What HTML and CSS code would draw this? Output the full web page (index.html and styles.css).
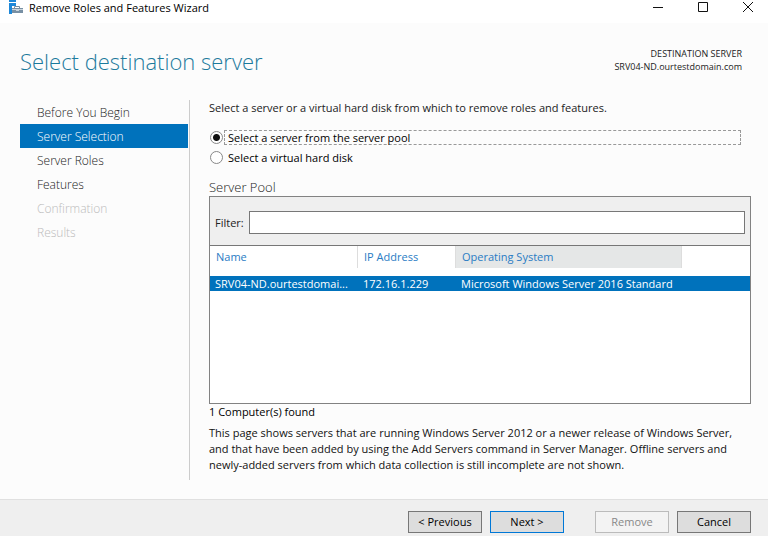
FILE: index.html
```html
<!DOCTYPE html>
<html lang="en">
<head>
    <meta charset="UTF-8">
    <title>Remove Roles and Features Wizard</title>
    <link rel="stylesheet" href="styles.css">
</head>
<body>

    <header class="titlebar">
        <svg class="app-icon" width="14" height="14" viewBox="0 0 14 14" aria-hidden="true">
            <path fill="#1e88d8" d="M0 0h7v2H0zM0 3h7v3H3v8H0z"/>
            <path fill="none" stroke="#7890a4" d="M5.500 8V6.500h5V8"/>
            <path fill="#7890a4" d="M3 8h11v5H3z"/>
            <path fill="#c9d4dc" d="M3 9h11v1h-4v1H7v-1H3z"/>
        </svg>
        <span class="window-title">Remove Roles and Features Wizard</span>
        <div class="window-controls">
            <button type="button" aria-label="Minimize"><svg width="10" height="10" viewBox="0 0 10 10"><path d="M0 5.500h10"/></svg></button>
            <button type="button" aria-label="Maximize"><svg width="10" height="10" viewBox="0 0 10 10"><path d="M.5.5h9v9h-9z"/></svg></button>
            <button type="button" aria-label="Close"><svg width="10" height="10" viewBox="0 0 10 10"><path d="M0 0l10 10M10 0L0 10"/></svg></button>
        </div>
    </header>

    <div class="page-header">
        <h1>Select destination server</h1>
        <div class="destination">DESTINATION SERVER<br>SRV04-ND.ourtestdomain.com</div>
    </div>

    <div class="wizard">
        <nav class="steps">
            <a href="#">Before You Begin</a>
            <a href="#" class="active">Server Selection</a>
            <a href="#">Server Roles</a>
            <a href="#">Features</a>
            <a class="disabled">Confirmation</a>
            <a class="disabled">Results</a>
        </nav>

        <main class="content">
            <p class="intro">Select a server or a virtual hard disk from which to remove roles and features.</p>

            <div class="option">
                <input type="radio" name="target" id="pool" checked>
                <label for="pool" class="focused">Select a server from the server pool</label>
            </div>
            <div class="option">
                <input type="radio" name="target" id="vhd">
                <label for="vhd">Select a virtual hard disk</label>
            </div>

            <h2>Server Pool</h2>
            <div class="pool">
                <div class="filter">
                    <label for="filter">Filter:</label>
                    <input type="text" id="filter">
                </div>
                <table>
                    <colgroup>
                        <col class="col-name">
                        <col class="col-ip">
                        <col class="col-os">
                        <col>
                    </colgroup>
                    <thead>
                        <tr>
                            <th>Name</th>
                            <th>IP Address</th>
                            <th class="sorted">Operating System</th>
                            <th class="rest"></th>
                        </tr>
                    </thead>
                    <tbody>
                        <tr>
                            <td>SRV04-ND.ourtestdomai...</td>
                            <td>172.16.1.229</td>
                            <td>Microsoft Windows Server 2016 Standard</td>
                            <td></td>
                        </tr>
                    </tbody>
                </table>
            </div>

            <p class="found">1 Computer(s) found</p>
            <p class="note">This page shows servers that are running Windows Server 2012 or a newer release of Windows Server, and that have been added by using the Add Servers command in Server Manager. Offline servers and newly-added servers from which data collection is still incomplete are not shown.</p>
        </main>
    </div>

    <footer class="buttons">
        <button type="button">&lt; Previous</button>
        <button type="button" class="default">Next &gt;</button>
        <button type="button" class="apart" disabled>Remove</button>
        <button type="button">Cancel</button>
    </footer>

</body>
</html>
```
FILE: styles.css
```css
* {
    box-sizing: border-box;
}
body {
    margin: 0;
    min-height: 100vh;
    display: flex;
    flex-direction: column;
    font-family: "Open Sans", "Noto Sans", sans-serif;
    font-size: 11px;
    line-height: 16px;
    color: #222;
    background: #fcfcfc;
}
h1, h2, p {
    margin: 0;
    font-weight: 400;
}
button, input {
    font: inherit;
    color: inherit;
}
.titlebar {
    display: flex;
    height: 23px;
    padding-left: 9px;
    background: #fff;
    color: #000;
}
.window-title {
    padding-left: 6px;
}
.window-controls {
    display: flex;
    gap: 5px;
    margin-left: auto;
}
.window-controls button {
    width: 40px;
    height: 14px;
    padding: 0;
    border: 0;
    background: none;
    line-height: 0;
}
.window-controls path {
    fill: none;
    stroke: #111;
}
.page-header {
    display: flex;
    justify-content: space-between;
    padding: 22px 26px 0 20px;
    height: 77px;
}
h1 {
    font-size: 22px;
    font-weight: 300;
    line-height: 32px;
    color: #1c7a9c;
}
.destination {
    padding-top: 2px;
    font-size: 9px;
    line-height: 13px;
    text-align: right;
}
.wizard {
    display: flex;
    flex: 1;
    padding: 0 17px 19px 20px;
}
.steps {
    flex: 0 0 170px;
    padding-right: 1px;
    border-right: 1px solid #ccc;
}
.steps a {
    display: block;
    height: 24px;
    padding-left: 17px;
    font-size: 12px;
    font-weight: 300;
    line-height: 26px;
    color: #222;
    text-decoration: none;
}
.steps .active {
    background: #0072bc;
    color: #fff;
}
.steps .disabled {
    color: #bbb;
}
.content {
    flex: 1;
    min-width: 0;
    padding-left: 19px;
}
.intro {
    margin-bottom: 11px;
}
.option {
    display: flex;
    align-items: center;
    height: 20px;
    padding-right: 10px;
    color: #000;
}
.option input {
    appearance: none;
    flex: none;
    width: 13px;
    height: 13px;
    margin: 0 1px;
    border: 1px solid #888;
    border-radius: 50%;
    background: #fff;
}
.option input:checked {
    background: radial-gradient(circle, #111 3px, #fff 4px);
}
.option label {
    flex: 1;
    height: 15px;
    padding-left: 3px;
    line-height: 13px;
    border: 1px solid transparent;
}
.option .focused {
    border: 1px dashed #999;
}
h2 {
    margin-top: 12px;
    font-size: 13px;
    font-weight: 300;
    line-height: 17px;
}
.pool {
    height: 208px;
    border: 1px solid #828282;
    background: #fff;
}
.filter {
    display: flex;
    align-items: center;
    gap: 5px;
    height: 49px;
    padding: 3px 5px 0;
    border-bottom: 1px solid #777;
    background: #efefef;
}
.filter input {
    flex: 1;
    height: 23px;
    border: 1px solid #777;
    background: #fff;
}
table {
    width: 100%;
    table-layout: fixed;
    border-collapse: separate;
    border-spacing: 0;
}
.col-name {
    width: 148px;
}
.col-ip {
    width: 98px;
}
.col-os {
    width: 226px;
}
th {
    height: 22px;
    padding: 0 6px;
    border-right: 1px solid #ddd;
    font-weight: 400;
    text-align: left;
    color: #2a7cc4;
}
th.sorted {
    background: #e5e7e7;
}
th.rest {
    border: 0;
}
tbody::before {
    content: "";
    display: block;
    height: 8px;
}
td {
    height: 15px;
    padding: 0 5px;
    line-height: 15px;
    white-space: nowrap;
    background: #0072bc;
    color: #fff;
}
.found {
    color: #000;
}
.note {
    margin-top: 5px;
    color: #111;
}
.buttons {
    display: flex;
    justify-content: flex-end;
    gap: 8px;
    height: 37px;
    padding: 11px 17px 0;
    border-top: 1px solid #e0e0e0;
    background: #efefef;
}
.buttons button {
    width: 74px;
    height: 22px;
    padding: 0;
    border: 1px solid #777;
    background: #ddd;
    color: #000;
}
.buttons .default {
    border-color: #0078d7;
}
.buttons .apart {
    margin-left: 23px;
}
.buttons button:disabled {
    border-color: #bbb;
    background: #f3f3f3;
    color: #888;
}
```
